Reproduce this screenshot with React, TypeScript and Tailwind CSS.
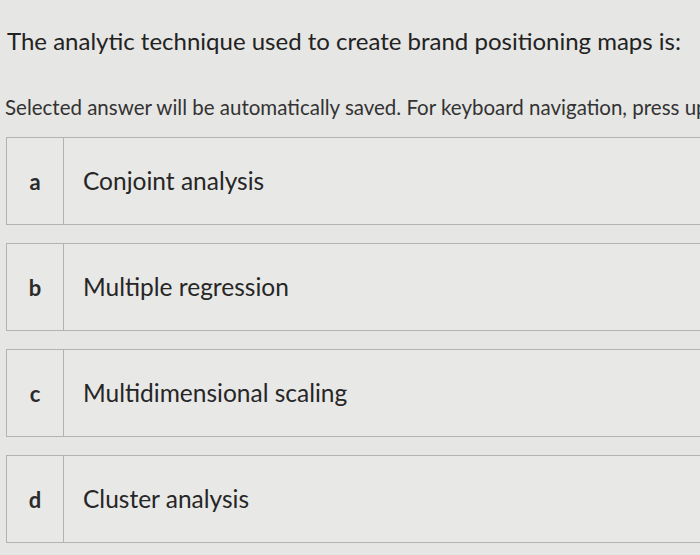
import React from "react";

const options = [
  { letter: "a", text: "Conjoint analysis" },
  { letter: "b", text: "Multiple regression" },
  { letter: "c", text: "Multidimensional scaling" },
  { letter: "d", text: "Cluster analysis" },
];

export default function App() {
  return (
    <div
      className="w-[700px] h-[555px] overflow-hidden bg-[#e6e6e4]"
      style={{ fontFamily: "Lato, 'Open Sans', sans-serif" }}
    >
      <h1 className="pl-[7px] pt-[24px] text-[24px] leading-[34px] text-[#222222] whitespace-nowrap">
        The analytic technique used to create brand positioning maps is:
      </h1>
      <p className="pl-[5px] mt-[35px] text-[20.5px] leading-[28px] text-[#333333] whitespace-nowrap">
        Selected answer will be automatically saved. For keyboard navigation, press up/down arrow keys to select an answer.
      </p>
      <div className="mt-[16px] pl-[6px] flex flex-col gap-[18px]">
        {options.map((o) => (
          <div
            key={o.letter}
            className="flex h-[88px] w-[760px] border border-[#b2b2b0] bg-[#e8e8e6]"
          >
            <div className="w-[57px] shrink-0 border-r border-[#b2b2b0] flex items-center justify-center text-[22px] font-bold text-[#2a2a2a]">
              {o.letter}
            </div>
            <div className="pl-[19px] flex items-center text-[24.5px] text-[#262626]">
              {o.text}
            </div>
          </div>
        ))}
      </div>
    </div>
  );
}
